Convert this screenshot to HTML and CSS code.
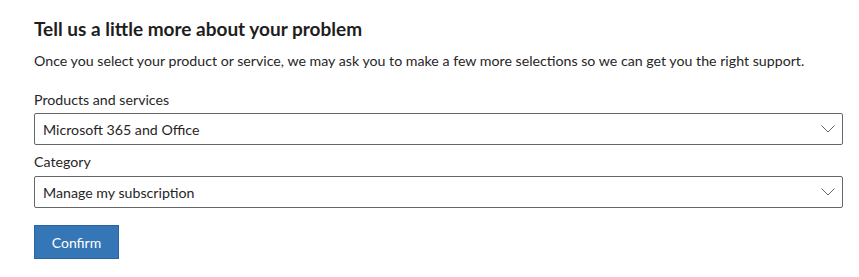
FILE: index.html
```html
<!DOCTYPE html>
<html lang="en">
<head>
<meta charset="utf-8">
<link rel="stylesheet" href="styles.css">
</head>
<body>
<main class="form">
  <h2 class="title">Tell us a little more about your problem</h2>
  <p class="intro">Once you select your product or service, we may ask you to make a few more selections so we can get you the right support.</p>
  <div class="field first">
    <label class="label">Products and services</label>
    <div class="select">
      <span>Microsoft 365 and Office</span>
      <svg class="chev" width="14" height="8" viewBox="0 0 14 8"><path d="M0.5 0.5 L7 7 L13.5 0.5" fill="none" stroke="#666" stroke-width="1"/></svg>
    </div>
  </div>
  <div class="field">
    <label class="label">Category</label>
    <div class="select">
      <span>Manage my subscription</span>
      <svg class="chev" width="14" height="8" viewBox="0 0 14 8"><path d="M0.5 0.5 L7 7 L13.5 0.5" fill="none" stroke="#666" stroke-width="1"/></svg>
    </div>
  </div>
  <button class="confirm">Confirm</button>
</main>
</body>
</html>
```
FILE: styles.css
```css
html, body { margin: 0; padding: 0; background: #fff; }
body { font-family: Lato, "Noto Sans", sans-serif; color: #222; }
.form { padding: 15px 16px 0 34px; display: flex; flex-direction: column; align-items: flex-start; }
.title { margin: 0; font-size: 19px; font-weight: 700; line-height: 27px; color: #1e1e1e; }
.intro { margin: 9px 0 0; font-size: 14.2px; line-height: 20px; color: #262626; white-space: nowrap; }
.field { width: 809px; display: flex; flex-direction: column; }
.label { font-size: 14.2px; line-height: 20px; margin-top: 7px; margin-bottom: 4px; color: #262626; }
.field.first .label { margin-top: 19px; margin-bottom: 3px; }
.select { box-sizing: border-box; height: 32px; border: 1px solid #666; border-radius: 2px; display: flex; align-items: center; justify-content: space-between; padding: 0 7px 0 8px; font-size: 14.2px; color: #262626; }
.chev { display: block; }
.confirm { margin-top: 17px; width: 85px; height: 34px; background: #3476b6; border: 1px solid #2b64a0; color: #fff; font-family: inherit; font-size: 14px; padding: 0; }
```
